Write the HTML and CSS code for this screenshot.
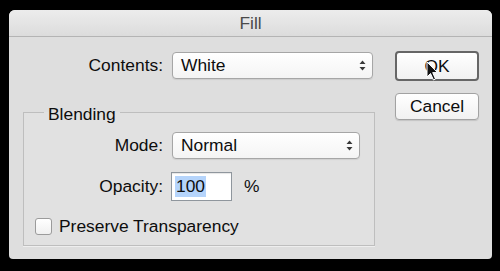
FILE: index.html
```html
<!DOCTYPE html>
<html>
<head>
<meta charset="utf-8">
<link rel="stylesheet" href="styles.css">
</head>
<body>
<div class="dialog">
  <div class="titlebar">Fill</div>
  <div class="content">
    <div class="left">
      <div class="row row-contents">
        <span class="label">Contents:</span>
        <div class="select select-wide">
          <span>White</span>
          <svg class="arrows" width="7" height="11" viewBox="0 0 7 11"><path d="M3.5 0.5 L6.5 4 L0.5 4 Z M3.5 10.5 L6.5 7 L0.5 7 Z" fill="#3a3a3a"/></svg>
        </div>
      </div>
      <fieldset class="group">
        <legend class="legend">Blending</legend>
        <div class="row row-mode">
          <span class="label label-in">Mode:</span>
          <div class="select select-mode">
            <span>Normal</span>
            <svg class="arrows" width="7" height="11" viewBox="0 0 7 11"><path d="M3.5 0.5 L6.5 4 L0.5 4 Z M3.5 10.5 L6.5 7 L0.5 7 Z" fill="#3a3a3a"/></svg>
          </div>
        </div>
        <div class="row row-opacity">
          <span class="label label-in label-op">Opacity:</span>
          <div class="field"><span class="sel">100</span></div>
          <span class="pct">%</span>
        </div>
        <div class="row row-check">
          <span class="checkbox"></span>
          <span class="check-text">Preserve Transparency</span>
        </div>
      </fieldset>
    </div>
    <div class="buttons">
      <div class="btn btn-ok">OK
        <svg class="cursor" width="13" height="20" viewBox="0 0 13 20"><path d="M1 1 L1 16 L4.5 12.5 L7.5 19 L9.5 18 L6.7 11.6 L11.5 11.6 Z" fill="#111" stroke="#fff" stroke-width="1" stroke-linejoin="round"/></svg>
      </div>
      <div class="btn btn-cancel">Cancel</div>
    </div>
  </div>
</div>
</body>
</html>
```
FILE: styles.css
```css
html, body {
  margin: 0;
  padding: 0;
  background: #000;
}
body {
  width: 500px;
  height: 271px;
  overflow: hidden;
  font-family: "Liberation Sans", Arial, sans-serif;
  font-size: 17.4px;
  color: #0d0d0d;
}
.dialog {
  margin: 10px 0 0 9px;
  width: 483px;
  height: 249px;
  background: #dedede;
  border-radius: 6px 6px 4px 4px;
  overflow: hidden;
}
.titlebar {
  height: 26px;
  border-bottom: 1px solid #b4b4b4;
  background: linear-gradient(#ececec, #dcdcdc);
  display: flex;
  align-items: center;
  justify-content: center;
  color: #4a4a4a;
  font-size: 17.4px;
}
.content {
  display: flex;
  gap: 20px;
  padding: 14px 13px 0 14px;
}
.left {
  width: 352px;
  display: flex;
  flex-direction: column;
}
.row {
  display: flex;
  align-items: center;
}
.row-contents {
  margin-top: 1px;
}
.label {
  width: 140px;
  text-align: right;
  margin-right: 9px;
}
.label-in {
  width: 139px;
}
.label-op {
  margin-right: 8px;
}
.select {
  box-sizing: border-box;
  height: 27px;
  border: 1px solid #a6a6a6;
  border-radius: 4px;
  background: linear-gradient(#ffffff, #f4f4f4);
  box-shadow: 0 1px 1px rgba(0,0,0,0.08);
  display: flex;
  align-items: center;
  justify-content: space-between;
  padding: 0 6px 0 8px;
}
.select-wide {
  width: 201px;
}
.select-mode {
  width: 188px;
}
.arrows {
  display: block;
}
.group {
  margin: 23px 0 0 0;
  padding: 10px 0 8px 0;
  border: 1px solid #bebebe;
  background: #e1e1e1;
  box-shadow: 0 1px 0 #eeeeee;
  min-width: 0;
}
.legend {
  box-sizing: border-box;
  margin-left: 20px;
  padding: 4px 4px 0 4px;
  height: 20px;
  line-height: 16px;
}
.row-opacity {
  margin-top: 13px;
}
.field {
  box-sizing: border-box;
  width: 61px;
  height: 29px;
  border: 1px solid #8f969d;
  background: #fff;
  display: flex;
  align-items: center;
  padding-left: 3px;
  box-shadow: inset 0 1px 1px rgba(0,0,0,0.1);
}
.sel {
  background: #b5d4fb;
  padding: 1px 1px;
  line-height: 19px;
}
.pct {
  margin-left: 12px;
}
.row-check {
  margin-top: 15px;
}
.checkbox {
  box-sizing: border-box;
  width: 17px;
  height: 17px;
  margin-left: 11px;
  border: 1px solid #9b9b9b;
  border-radius: 3px;
  background: linear-gradient(#ffffff, #f0f0f0);
}
.check-text {
  margin-left: 7px;
}
.buttons {
  width: 84px;
  display: flex;
  flex-direction: column;
  gap: 12px;
}
.btn {
  box-sizing: border-box;
  display: flex;
  align-items: center;
  justify-content: center;
  border-radius: 4px;
  background: linear-gradient(#ffffff, #f1f1f1);
}
.btn-ok {
  position: relative;
  height: 30px;
  border: 2px solid #666666;
}
.btn-cancel {
  height: 27px;
  border: 1px solid #a2a2a2;
  box-shadow: 0 1px 1px rgba(0,0,0,0.12);
}
.cursor {
  position: absolute;
  left: 29px;
  top: 8px;
}
```
